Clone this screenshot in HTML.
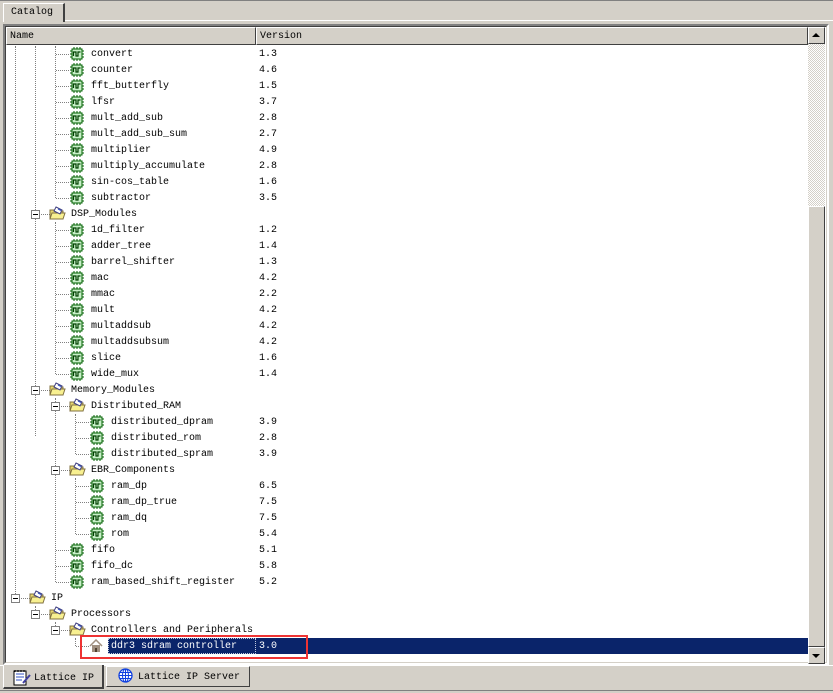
<!DOCTYPE html>
<html><head><meta charset="utf-8"><style>
*{margin:0;padding:0;box-sizing:border-box}
body{width:833px;height:693px;background:#d4d0c8;position:relative;overflow:hidden;font-family:"Liberation Mono","Noto Sans CJK SC",monospace;font-size:10px;color:#000}
.abs{position:absolute}
.r{position:absolute;left:0;height:16px;width:808px}
.t{position:absolute;top:3px;line-height:12px;white-space:pre}
.v{position:absolute;left:259px;top:3px;line-height:12px}
.chip{position:absolute;top:1px;width:14px;height:14px}
.fold{position:absolute;top:0;width:17px;height:15px}
.box{position:absolute;top:4px;width:9px;height:9px;border:1px solid #808080;background:#fff}
.box:after{content:"";position:absolute;left:1px;top:3px;width:5px;height:1px;background:#000}
.h{position:absolute;top:8px;height:0;border-top:1px dotted #808080}
.vl{position:absolute;width:0;border-left:1px dotted #808080}
</style></head><body>
<svg width="0" height="0" style="position:absolute">
<defs>
<symbol id="c" viewBox="0 0 14 14"><rect x="2" y="2" width="10" height="10" fill="#c8f0c8" stroke="#006000"/><path d="M0 4h2M0 7h2M0 10h2M12 4h2M12 7h2M12 10h2M4 0v2M7 0v2M10 0v2M4 12v2M7 12v2M10 12v2" stroke="#006000"/><path d="M3.5 9V5h2.5v4h2V5h2.5" fill="none" stroke="#004000" stroke-width="1.2"/></symbol>
<symbol id="f" viewBox="0 0 17 15"><path d="M1 4h5l1 1h7v8H1z" fill="#e8d870" stroke="#807040"/><path d="M3 7h13l-2 6H1z" fill="#f8f090" stroke="#807040"/><path d="M7 1l6 3-2 4-6-3z" fill="#fff" stroke="#404080"/><path d="M9 3l3 1.5" stroke="#3050c0"/></symbol>
</defs></svg>

<div class="abs" style="left:0;top:0;width:833px;height:1px;background:#808080"></div>
<div class="abs" style="left:3px;top:3px;width:62px;height:19px;background:#d4d0c8;border-left:1px solid #fff;border-top:1px solid #fff;border-right:2px solid #404040"></div>
<div class="abs" style="left:11px;top:7px;line-height:12px">Catalog</div>
<div class="abs" style="left:65px;top:20px;width:768px;height:1px;background:#fff"></div>
<div class="abs" style="left:3px;top:24px;width:826px;height:641px;border:2px solid;border-color:#808080 #fff #fff #808080;background:#fff"></div>
<div class="abs" style="left:5px;top:26px;width:822px;height:637px;border:1px solid;border-color:#404040 #d4d0c8 #d4d0c8 #404040;background:#fff"></div>
<div class="abs" style="left:6px;top:27px;width:250px;height:18px;background:#d4d0c8;border:1px solid;border-color:#fff #404040 #404040 #fff"></div>
<div class="abs" style="left:10px;top:31px;line-height:12px">Name</div>
<div class="abs" style="left:256px;top:27px;width:552px;height:18px;background:#d4d0c8;border:1px solid;border-color:#fff #404040 #404040 #fff"></div>
<div class="abs" style="left:260px;top:31px;line-height:12px">Version</div>
<div class="abs" style="left:808px;top:27px;width:17px;height:636px;background-color:#ece9e3;background-image:repeating-conic-gradient(#d4d0c8 0 25%,#fff 0 50%);background-size:2px 2px"></div>
<div class="abs" style="left:808px;top:27px;width:17px;height:17px;background:#d4d0c8;border:1px solid;border-color:#fff #404040 #404040 #fff"></div>
<div class="abs" style="left:812px;top:33px;width:0;height:0;border-left:4px solid transparent;border-right:4px solid transparent;border-bottom:4px solid #000"></div>
<div class="abs" style="left:808px;top:206px;width:17px;height:441px;background:#d4d0c8;border:1px solid;border-color:#fff #404040 #404040 #fff"></div>
<div class="abs" style="left:808px;top:647px;width:17px;height:17px;background:#d4d0c8;border:1px solid;border-color:#fff #404040 #404040 #fff"></div>
<div class="abs" style="left:812px;top:654px;width:0;height:0;border-left:4px solid transparent;border-right:4px solid transparent;border-top:4px solid #000"></div>

<div class="abs" style="left:6px;top:46px;width:802px;height:617px;overflow:hidden">
<div style="position:absolute;left:-6px;top:0;width:808px;height:620px">
<div class="vl" style="left:15px;top:0;height:552px"></div>
<div class="vl" style="left:35px;top:0;height:390px"></div>
<div class="vl" style="left:55px;top:0;height:152px"></div>
<div class="vl" style="left:55px;top:176px;height:152px"></div>
<div class="vl" style="left:55px;top:352px;height:184px"></div>
<div class="vl" style="left:75px;top:368px;height:40px"></div>
<div class="vl" style="left:75px;top:432px;height:56px"></div>
<div class="vl" style="left:35px;top:560px;height:8px"></div>
<div class="vl" style="left:55px;top:576px;height:8px"></div>
<div class="vl" style="left:75px;top:592px;height:8px"></div>

<div class="r" style="top:0"><div class="h" style="left:56px;width:13px"></div><svg class="chip" style="left:70px"><use href="#c"/></svg><span class="t" style="left:91px">convert</span><span class="v">1.3</span></div>
<div class="r" style="top:16px"><div class="h" style="left:56px;width:13px"></div><svg class="chip" style="left:70px"><use href="#c"/></svg><span class="t" style="left:91px">counter</span><span class="v">4.6</span></div>
<div class="r" style="top:32px"><div class="h" style="left:56px;width:13px"></div><svg class="chip" style="left:70px"><use href="#c"/></svg><span class="t" style="left:91px">fft_butterfly</span><span class="v">1.5</span></div>
<div class="r" style="top:48px"><div class="h" style="left:56px;width:13px"></div><svg class="chip" style="left:70px"><use href="#c"/></svg><span class="t" style="left:91px">lfsr</span><span class="v">3.7</span></div>
<div class="r" style="top:64px"><div class="h" style="left:56px;width:13px"></div><svg class="chip" style="left:70px"><use href="#c"/></svg><span class="t" style="left:91px">mult_add_sub</span><span class="v">2.8</span></div>
<div class="r" style="top:80px"><div class="h" style="left:56px;width:13px"></div><svg class="chip" style="left:70px"><use href="#c"/></svg><span class="t" style="left:91px">mult_add_sub_sum</span><span class="v">2.7</span></div>
<div class="r" style="top:96px"><div class="h" style="left:56px;width:13px"></div><svg class="chip" style="left:70px"><use href="#c"/></svg><span class="t" style="left:91px">multiplier</span><span class="v">4.9</span></div>
<div class="r" style="top:112px"><div class="h" style="left:56px;width:13px"></div><svg class="chip" style="left:70px"><use href="#c"/></svg><span class="t" style="left:91px">multiply_accumulate</span><span class="v">2.8</span></div>
<div class="r" style="top:128px"><div class="h" style="left:56px;width:13px"></div><svg class="chip" style="left:70px"><use href="#c"/></svg><span class="t" style="left:91px">sin-cos_table</span><span class="v">1.6</span></div>
<div class="r" style="top:144px"><div class="h" style="left:56px;width:13px"></div><svg class="chip" style="left:70px"><use href="#c"/></svg><span class="t" style="left:91px">subtractor</span><span class="v">3.5</span></div>

<div class="r" style="top:160px"><div class="h" style="left:36px;width:14px"></div><div class="box" style="left:31px"></div><svg class="fold" style="left:49px"><use href="#f"/></svg><span class="t" style="left:71px">DSP_Modules</span></div>
<div class="r" style="top:176px"><div class="h" style="left:56px;width:13px"></div><svg class="chip" style="left:70px"><use href="#c"/></svg><span class="t" style="left:91px">1d_filter</span><span class="v">1.2</span></div>
<div class="r" style="top:192px"><div class="h" style="left:56px;width:13px"></div><svg class="chip" style="left:70px"><use href="#c"/></svg><span class="t" style="left:91px">adder_tree</span><span class="v">1.4</span></div>
<div class="r" style="top:208px"><div class="h" style="left:56px;width:13px"></div><svg class="chip" style="left:70px"><use href="#c"/></svg><span class="t" style="left:91px">barrel_shifter</span><span class="v">1.3</span></div>
<div class="r" style="top:224px"><div class="h" style="left:56px;width:13px"></div><svg class="chip" style="left:70px"><use href="#c"/></svg><span class="t" style="left:91px">mac</span><span class="v">4.2</span></div>
<div class="r" style="top:240px"><div class="h" style="left:56px;width:13px"></div><svg class="chip" style="left:70px"><use href="#c"/></svg><span class="t" style="left:91px">mmac</span><span class="v">2.2</span></div>
<div class="r" style="top:256px"><div class="h" style="left:56px;width:13px"></div><svg class="chip" style="left:70px"><use href="#c"/></svg><span class="t" style="left:91px">mult</span><span class="v">4.2</span></div>
<div class="r" style="top:272px"><div class="h" style="left:56px;width:13px"></div><svg class="chip" style="left:70px"><use href="#c"/></svg><span class="t" style="left:91px">multaddsub</span><span class="v">4.2</span></div>
<div class="r" style="top:288px"><div class="h" style="left:56px;width:13px"></div><svg class="chip" style="left:70px"><use href="#c"/></svg><span class="t" style="left:91px">multaddsubsum</span><span class="v">4.2</span></div>
<div class="r" style="top:304px"><div class="h" style="left:56px;width:13px"></div><svg class="chip" style="left:70px"><use href="#c"/></svg><span class="t" style="left:91px">slice</span><span class="v">1.6</span></div>
<div class="r" style="top:320px"><div class="h" style="left:56px;width:13px"></div><svg class="chip" style="left:70px"><use href="#c"/></svg><span class="t" style="left:91px">wide_mux</span><span class="v">1.4</span></div>

<div class="r" style="top:336px"><div class="h" style="left:36px;width:14px"></div><div class="box" style="left:31px"></div><svg class="fold" style="left:49px"><use href="#f"/></svg><span class="t" style="left:71px">Memory_Modules</span></div>
<div class="r" style="top:352px"><div class="h" style="left:56px;width:14px"></div><div class="box" style="left:51px"></div><svg class="fold" style="left:69px"><use href="#f"/></svg><span class="t" style="left:91px">Distributed_RAM</span></div>
<div class="r" style="top:368px"><div class="h" style="left:76px;width:13px"></div><svg class="chip" style="left:90px"><use href="#c"/></svg><span class="t" style="left:111px">distributed_dpram</span><span class="v">3.9</span></div>
<div class="r" style="top:384px"><div class="h" style="left:76px;width:13px"></div><svg class="chip" style="left:90px"><use href="#c"/></svg><span class="t" style="left:111px">distributed_rom</span><span class="v">2.8</span></div>
<div class="r" style="top:400px"><div class="h" style="left:76px;width:13px"></div><svg class="chip" style="left:90px"><use href="#c"/></svg><span class="t" style="left:111px">distributed_spram</span><span class="v">3.9</span></div>
<div class="r" style="top:416px"><div class="h" style="left:56px;width:14px"></div><div class="box" style="left:51px"></div><svg class="fold" style="left:69px"><use href="#f"/></svg><span class="t" style="left:91px">EBR_Components</span></div>
<div class="r" style="top:432px"><div class="h" style="left:76px;width:13px"></div><svg class="chip" style="left:90px"><use href="#c"/></svg><span class="t" style="left:111px">ram_dp</span><span class="v">6.5</span></div>
<div class="r" style="top:448px"><div class="h" style="left:76px;width:13px"></div><svg class="chip" style="left:90px"><use href="#c"/></svg><span class="t" style="left:111px">ram_dp_true</span><span class="v">7.5</span></div>
<div class="r" style="top:464px"><div class="h" style="left:76px;width:13px"></div><svg class="chip" style="left:90px"><use href="#c"/></svg><span class="t" style="left:111px">ram_dq</span><span class="v">7.5</span></div>
<div class="r" style="top:480px"><div class="h" style="left:76px;width:13px"></div><svg class="chip" style="left:90px"><use href="#c"/></svg><span class="t" style="left:111px">rom</span><span class="v">5.4</span></div>
<div class="r" style="top:496px"><div class="h" style="left:56px;width:13px"></div><svg class="chip" style="left:70px"><use href="#c"/></svg><span class="t" style="left:91px">fifo</span><span class="v">5.1</span></div>
<div class="r" style="top:512px"><div class="h" style="left:56px;width:13px"></div><svg class="chip" style="left:70px"><use href="#c"/></svg><span class="t" style="left:91px">fifo_dc</span><span class="v">5.8</span></div>
<div class="r" style="top:528px"><div class="h" style="left:56px;width:13px"></div><svg class="chip" style="left:70px"><use href="#c"/></svg><span class="t" style="left:91px">ram_based_shift_register</span><span class="v">5.2</span></div>

<div class="r" style="top:544px"><div class="h" style="left:16px;width:14px"></div><div class="box" style="left:11px"></div><svg class="fold" style="left:29px"><use href="#f"/></svg><span class="t" style="left:51px">IP</span></div>
<div class="r" style="top:560px"><div class="h" style="left:36px;width:14px"></div><div class="box" style="left:31px"></div><svg class="fold" style="left:49px"><use href="#f"/></svg><span class="t" style="left:71px">Processors</span></div>
<div class="r" style="top:576px"><div class="h" style="left:56px;width:14px"></div><div class="box" style="left:51px"></div><svg class="fold" style="left:69px"><use href="#f"/></svg><span class="t" style="left:91px">Controllers and Peripherals</span></div>
<div class="r" style="top:592px"><div class="h" style="left:76px;width:13px"></div>
<div class="abs" style="left:108px;top:0;width:700px;height:16px;background:#0a246a"></div>
<svg class="abs" style="left:89px;top:1px" width="14" height="14" viewBox="0 0 14 14"><path d="M1 7L7 1l6 6" fill="none" stroke="#a09080" stroke-width="1.5"/><path d="M3 6h8v7H3z" fill="#a09080"/><path d="M6 9h2v4H6z" fill="#504030"/></svg>
<span class="t" style="left:111px;color:#fff">ddr3 sdram controller</span><span class="v" style="color:#fff">3.0</span>
<div class="abs" style="left:108px;top:0;width:148px;height:16px;border:1px dotted #c0c8e0"></div>
</div>
</div></div>
<div class="abs" style="left:80px;top:635px;width:228px;height:24px;border:2px solid #ee3333"></div>

<div class="abs" style="left:0;top:665px;width:833px;height:1px;background:#fff"></div>
<div class="abs" style="left:3px;top:665px;width:101px;height:24px;background:#d4d0c8;border-left:1px solid #fff;border-right:2px solid #404040;border-bottom:2px solid #404040"></div>
<svg class="abs" style="left:13px;top:669px" width="18" height="17" viewBox="0 0 18 17"><path d="M1 2h12v14H1z" fill="#fff" stroke="#000"/><path d="M3 5h8M3 8h8M3 11h6" stroke="#3050c0"/><path d="M10 14l7-8" stroke="#4040a0" stroke-width="2"/><path d="M2 1v2M5 1v2M8 1v2M11 1v2" stroke="#000"/></svg>
<div class="abs" style="left:34px;top:673px;line-height:12px">Lattice IP</div>
<div class="abs" style="left:106px;top:666px;width:144px;height:21px;background:#d4d0c8;border:1px solid;border-color:#fff #404040 #404040 #fff"></div>
<svg class="abs" style="left:118px;top:668px" width="15" height="15" viewBox="0 0 15 15"><circle cx="7.5" cy="7.5" r="6.5" fill="#fff" stroke="#1040e0" stroke-width="1.3"/><ellipse cx="7.5" cy="7.5" rx="3" ry="6.5" fill="none" stroke="#1040e0"/><path d="M1 7.5h13M2 4.5h11M2 10.5h11M7.5 1v13" stroke="#1040e0"/></svg>
<div class="abs" style="left:138px;top:672px;line-height:12px">Lattice IP Server</div>
<div class="abs" style="left:0;top:690px;width:833px;height:3px;border-top:1px solid #808080"></div>
</body></html>
